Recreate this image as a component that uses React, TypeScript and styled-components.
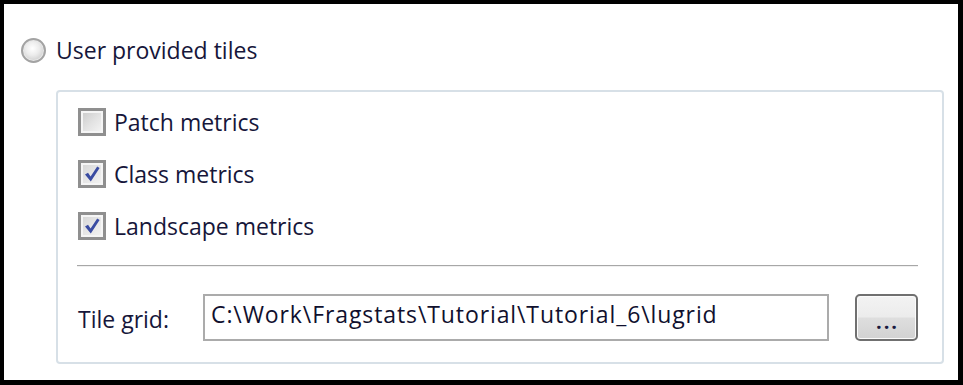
import React from "react";
import styled, { createGlobalStyle } from "styled-components";

const GlobalStyle = createGlobalStyle`
  html, body {
    margin: 0;
    padding: 0;
    background: #ffffff;
  }
  * {
    box-sizing: border-box;
  }
`;

const Frame = styled.div`
  width: 963px;
  height: 385px;
  border-style: solid;
  border-color: #000000;
  border-width: 4px 5px 5px 4px;
  background: #ffffff;
  display: flex;
  flex-direction: column;
  padding: 33px 14px 16px 17px;
  font-family: "Open Sans", "Noto Sans", sans-serif;
  font-size: 23px;
  color: #16163a;
`;

const OptionRow = styled.label`
  display: flex;
  align-items: center;
  gap: 10px;
  height: 26px;
  line-height: 26px;
`;

const Radio = styled.span`
  width: 25px;
  height: 25px;
  border-radius: 50%;
  border: 2px solid #a3a3a3;
  background: radial-gradient(
    circle at 45% 40%,
    #ffffff 0%,
    #ececec 40%,
    #cfcfcf 75%,
    #bdbdbd 100%
  );
  box-shadow: inset 0 0 0 1px #e8e8e8;
  flex: none;
`;

const GroupBox = styled.div`
  margin: 27px 0 0 35px;
  flex: 1;
  border: 2px solid #d7e0e7;
  border-radius: 4px;
  padding: 16px 24px 21px 20px;
  display: flex;
  flex-direction: column;
`;

const CheckList = styled.div`
  display: flex;
  flex-direction: column;
  gap: 24px;
`;

const CheckRow = styled.label`
  display: flex;
  align-items: center;
  gap: 8px;
  height: 28px;
  line-height: 28px;
`;

const Box = styled.span<{ $checked: boolean }>`
  width: 28px;
  height: 28px;
  flex: none;
  border: 3px solid #8f8f8f;
  box-shadow: inset 0 0 0 2px #f5f5f5;
  background: ${(p) =>
    p.$checked
      ? "linear-gradient(135deg, #d4d4d4 0%, #e6e6e6 50%, #f4f4f4 100%)"
      : "linear-gradient(135deg, #c9c9c9 0%, #e2e2e2 50%, #f6f6f6 100%)"};
  display: flex;
  align-items: center;
  justify-content: center;
`;

const Separator = styled.div`
  margin-top: 25px;
  height: 2px;
  background: #a7a7a7;
  border-bottom: 1px solid #f0f0f0;
  margin-left: -1px;
`;

const TileRow = styled.div`
  margin-top: 27px;
  display: flex;
  align-items: center;
`;

const FieldLabel = styled.span`
  width: 125px;
  flex: none;
  margin-top: 3px;
`;

const PathInput = styled.input`
  width: 626px;
  height: 47px;
  border: 2px solid #ababab;
  background: #ffffff;
  font-family: "Open Sans", "Noto Sans", sans-serif;
  font-size: 23px;
  letter-spacing: 0.9px;
  color: #10102e;
  padding: 0 6px 7px 6px;
  outline: none;
`;

const BrowseButton = styled.button`
  margin-left: 26px;
  width: 63px;
  height: 47px;
  border: 2px solid #707070;
  border-radius: 5px;
  background: linear-gradient(
    to bottom,
    #f3f3f3 0%,
    #ececec 48%,
    #dedede 52%,
    #d2d2d2 100%
  );
  box-shadow: inset 0 0 0 1px #fbfbfb;
  font-family: "Open Sans", "Noto Sans", sans-serif;
  font-size: 20px;
  font-weight: 700;
  color: #1a1a40;
  letter-spacing: 2px;
  padding: 8px 0 0 2px;
  line-height: 1;
`;

const CheckMark = () => (
  <svg width="20" height="20" viewBox="0 0 20 20">
    <path
      d="M3 10.5 L6 8.8 L8.6 12.6 L15.2 2.6 L17.6 4 L8.8 17.4 Z"
      fill="#3a4ca2"
    />
  </svg>
);

const Check = ({ checked, label }: { checked: boolean; label: string }) => (
  <CheckRow>
    <Box $checked={checked}>{checked && <CheckMark />}</Box>
    <span>{label}</span>
  </CheckRow>
);

export default function App() {
  return (
    <>
      <GlobalStyle />
      <Frame>
        <OptionRow>
          <Radio />
          <span>User provided tiles</span>
        </OptionRow>
        <GroupBox>
          <CheckList>
            <Check checked={false} label="Patch metrics" />
            <Check checked label="Class metrics" />
            <Check checked label="Landscape metrics" />
          </CheckList>
          <Separator />
          <TileRow>
            <FieldLabel>Tile grid:</FieldLabel>
            <PathInput
              readOnly
              value={"C:\\Work\\Fragstats\\Tutorial\\Tutorial_6\\lugrid"}
            />
            <BrowseButton>...</BrowseButton>
          </TileRow>
        </GroupBox>
      </Frame>
    </>
  );
}
